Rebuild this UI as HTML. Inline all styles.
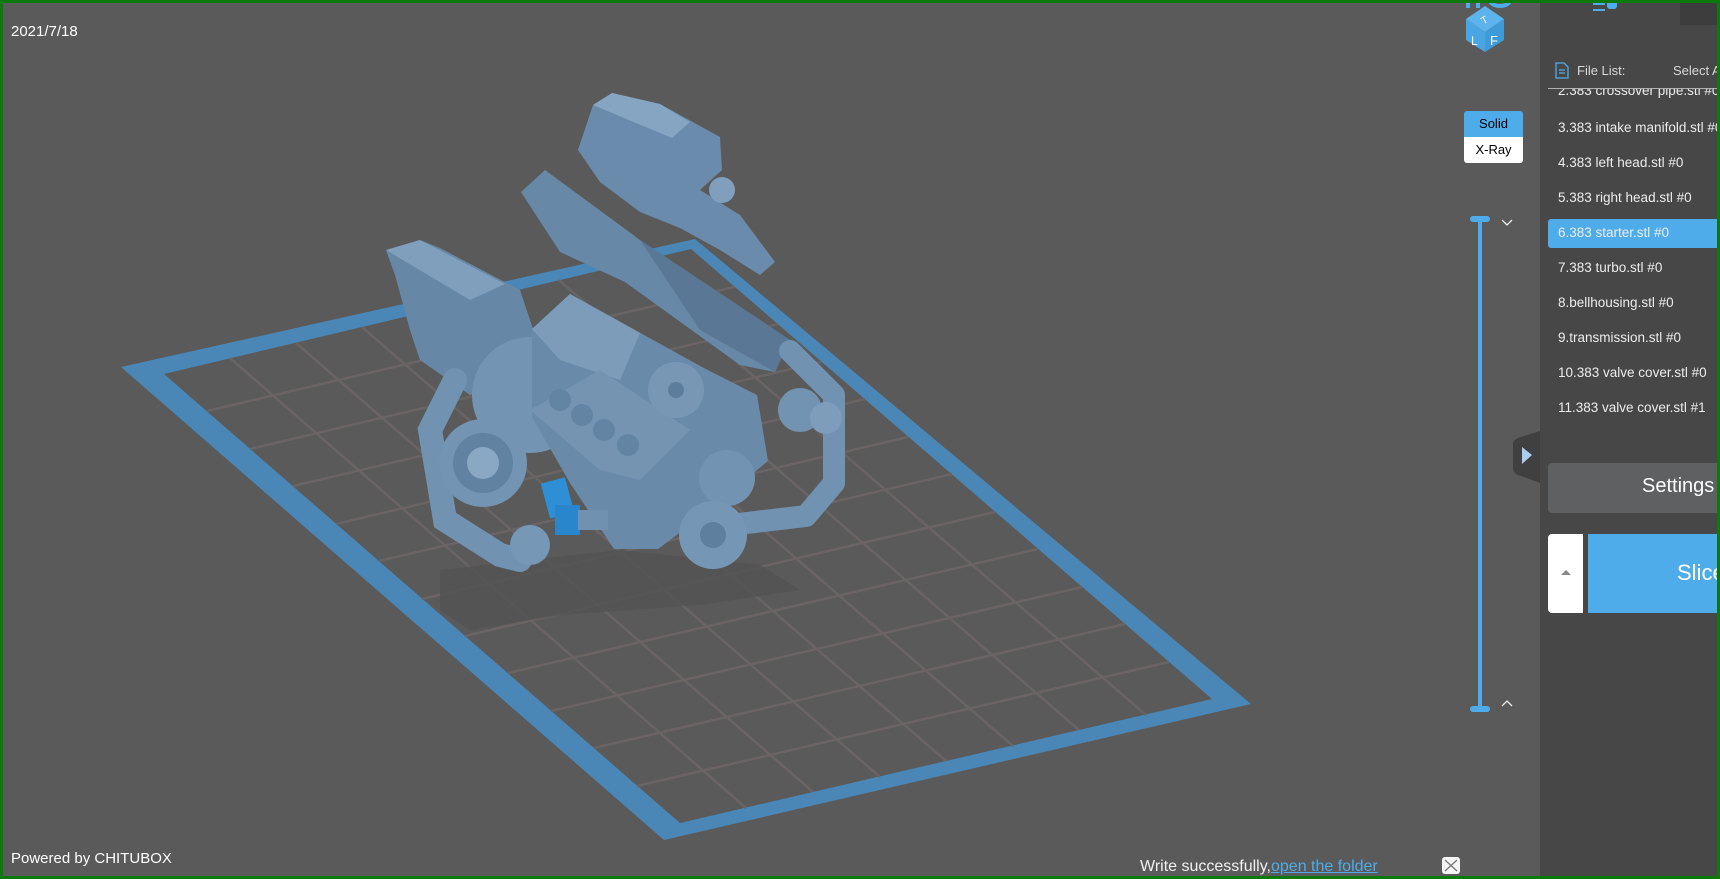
<!DOCTYPE html>
<html><head><meta charset="utf-8"><style>
*{margin:0;padding:0;box-sizing:border-box}
body{width:1720px;height:879px;overflow:hidden;background:#0b7a0b;font-family:"Liberation Sans",sans-serif;position:relative}
#vp{position:absolute;left:3px;top:3px;width:1537px;height:873px;background:#5a5a5a;overflow:hidden}
#sb{position:absolute;left:1540px;top:3px;width:177px;height:873px;background:#474747;overflow:hidden}
.t{position:absolute;color:#fff;white-space:nowrap}
.li{position:absolute;left:18px;color:#ececec;font-size:13.5px;white-space:nowrap}
</style></head><body>
<div id="vp">
<svg width="1537" height="873" viewBox="3 3 1537 873" style="position:absolute;left:0;top:0">
<path fill-rule="evenodd" fill="#4a87b6" d="M121,367 L695,239 L1251,704 L664,840 Z M164,374 L680,823 L1212,699 L691,249 Z"/>
<g stroke="#6a6464" stroke-width="2.5">
<line x1="230" y1="358" x2="746" y2="808"/><line x1="296" y1="343" x2="813" y2="792"/><line x1="362" y1="327" x2="880" y2="777"/><line x1="428" y1="312" x2="946" y2="761"/><line x1="493" y1="296" x2="1013" y2="746"/><line x1="559" y1="280" x2="1079" y2="730"/><line x1="625" y1="265" x2="1146" y2="715"/>
<line x1="207" y1="411" x2="734" y2="287"/><line x1="250" y1="449" x2="778" y2="324"/><line x1="293" y1="486" x2="821" y2="362"/><line x1="336" y1="524" x2="865" y2="399"/><line x1="379" y1="561" x2="908" y2="437"/><line x1="422" y1="599" x2="952" y2="474"/><line x1="465" y1="636" x2="995" y2="512"/><line x1="508" y1="673" x2="1038" y2="549"/><line x1="551" y1="711" x2="1082" y2="587"/><line x1="594" y1="748" x2="1125" y2="624"/><line x1="637" y1="786" x2="1169" y2="662"/>
</g>
<path fill="#535353" opacity="0.8" d="M440,570 L620,550 L760,565 L800,590 L700,605 L560,615 L470,630 L440,610 Z"/>
<path fill="#6a8bab" d="M593,105 L612,93 L660,104 L720,137 L722,170 L700,190 L740,215 L775,262 L760,275 L720,250 L680,228 L640,212 L600,182 L578,150 Z"/>
<path fill="#86a5c2" d="M593,105 L612,93 L660,104 L690,122 L672,138 Z"/>
<circle cx="722" cy="190" r="13" fill="#7f9fbd"/>
<path fill="#6888a7" d="M521,192 L545,170 L640,240 L790,340 L775,372 L740,365 L625,282 L560,252 Z"/>
<path fill="#5a7895" d="M640,240 L790,340 L775,372 L700,330 Z"/>
<path fill="#6787a6" d="M386,250 L420,240 L440,248 L520,290 L535,335 L520,380 L470,395 L420,360 L410,330 L395,275 Z"/>
<path fill="#7f9fbd" d="M386,250 L420,240 L505,284 L470,300 Z"/>
<circle cx="530" cy="395" r="58" fill="#7394b3"/>
<path fill="#6a8aa9" d="M532,329 L570,294 L702,367 L757,395 L768,461 L702,516 L658,549 L614,549 L570,483 L532,417 Z"/>
<path fill="#7c9cba" d="M532,329 L570,294 L640,333 L620,380 L560,360 Z"/>
<path fill="#7494b2" d="M530,410 L600,370 L690,430 L640,480 L600,470 Z"/>
<g fill="#6384a3"><circle cx="560" cy="400" r="11"/><circle cx="582" cy="415" r="11"/><circle cx="604" cy="430" r="11"/><circle cx="628" cy="445" r="11"/></g>
<path fill="none" stroke="#7192b1" stroke-width="22" stroke-linecap="round" stroke-linejoin="round" d="M790,351 L834,395 L834,483 L806,516 L713,527"/>
<path fill="none" stroke="#7192b1" stroke-width="24" stroke-linecap="round" d="M455,380 L430,430 L445,520 L500,555 L520,560"/>
<circle cx="483" cy="463" r="44" fill="#7394b3"/>
<circle cx="483" cy="463" r="30" fill="#6282a1"/>
<circle cx="483" cy="463" r="16" fill="#8aa8c4"/>
<circle cx="530" cy="545" r="20" fill="#7697b5"/>
<circle cx="676" cy="390" r="28" fill="#7797b5"/><circle cx="676" cy="390" r="8" fill="#5d7d9c"/>
<circle cx="727" cy="478" r="28" fill="#7393b2"/>
<circle cx="713" cy="535" r="34" fill="#7596b4"/><circle cx="713" cy="535" r="13" fill="#5f7f9e"/>
<circle cx="800" cy="410" r="22" fill="#7393b2"/><circle cx="826" cy="418" r="16" fill="#7e9dbb"/>
<rect x="545" y="480" width="25" height="36" fill="#2f8fd6" transform="rotate(-15 557 498)"/>
<rect x="555" y="505" width="25" height="30" fill="#2a86cc"/>
<rect x="578" y="510" width="30" height="20" fill="#7091b0"/>
</svg>
<div class="t" style="left:8px;top:20px;font-size:15px">2021/7/18</div>
<div class="t" style="left:8px;top:847px;font-size:15px">Powered by CHITUBOX</div>
<div class="t" style="left:1137px;top:855px;font-size:16px;color:#f0f0f0">Write successfully,<span style="color:#4eacea;text-decoration:underline">open the folder</span></div>
<div style="position:absolute;left:1439px;top:854px;width:18px;height:17px;background:#f4f4f4;border-radius:3px"><svg width="18" height="17"><path d="M3,3 L15,14 M15,3 L3,14" stroke="#777" stroke-width="1.3"/></svg></div>
<svg style="position:absolute;left:1457px;top:-3px" width="60" height="60" viewBox="1460 0 60 60">
<path d="M1466,0 h4 v8 h-4z M1476,0 h4 v8 h-4z" fill="#4eacea"/>
<path d="M1490,0 a10 6 0 0 0 20,0" fill="none" stroke="#4eacea" stroke-width="4"/>
<path d="M1485,6 L1504,19 L1485,32 L1466,19 Z" fill="#5db4ec"/>
<path d="M1466,19 L1485,32 L1485,52 L1466,40 Z" fill="#4aa6e2"/>
<path d="M1485,32 L1504,19 L1504,40 L1485,52 Z" fill="#3f9bd8"/>
<text x="1481" y="23" font-size="10" fill="#fff" font-family="Liberation Sans" transform="rotate(-30 1485 19)">T</text>
<text x="1471" y="45" font-size="12" fill="#fff" font-family="Liberation Sans">L</text>
<text x="1490" y="45" font-size="13" fill="#fff" font-family="Liberation Sans">F</text>
</svg>
<div style="position:absolute;left:1461px;top:108px;width:59px;height:26px;background:#4eacea;border-radius:3px 3px 0 0;font-size:13px;text-align:center;line-height:26px">Solid</div>
<div style="position:absolute;left:1461px;top:134px;width:59px;height:26px;background:#fff;border-radius:0 0 3px 3px;font-size:13px;text-align:center;line-height:26px">X-Ray</div>
<div style="position:absolute;left:1475px;top:214px;width:4px;height:493px;background:#4eacea"></div>
<div style="position:absolute;left:1467px;top:213px;width:20px;height:6px;background:#4eacea;border-radius:3px"></div>
<div style="position:absolute;left:1467px;top:703px;width:20px;height:6px;background:#4eacea;border-radius:3px"></div>
<svg style="position:absolute;left:1497px;top:215px" width="14" height="10"><path d="M2,2 L7,7 L12,2" fill="none" stroke="#eee" stroke-width="1.3"/></svg>
<svg style="position:absolute;left:1497px;top:695px" width="14" height="10"><path d="M2,8 L7,3 L12,8" fill="none" stroke="#eee" stroke-width="1.3"/></svg>
<svg style="position:absolute;left:1510px;top:427px" width="30" height="54"><path d="M30,0 L30,54 L8,46 Q0,44 0,38 L0,14 Q0,9 8,7 Z" fill="#404040"/><path d="M9,17 L19,25 L9,34 Z" fill="#a9cdf0"/></svg>
</div>
<div id="sb">
<div style="position:absolute;left:140px;top:-3px;width:40px;height:25px;background:#3d3d3d"></div>
<div style="position:absolute;left:53px;top:0;width:12px;height:8px;border-bottom:2px solid #4eacea;border-top:2px solid #4eacea"></div>
<div style="position:absolute;left:67px;top:-3px;width:10px;height:9px;background:#4eacea;border-radius:0 0 3px 3px"></div>
<svg style="position:absolute;left:15px;top:59px" width="14" height="17"><path d="M1,1 H9 L13,5 V16 H1 Z M4,8 H10 M4,11 H10" fill="none" stroke="#4eacea" stroke-width="1.3"/></svg>
<div class="t" style="left:37px;top:60px;font-size:13px;color:#d8d8d8">File List:</div>
<div class="t" style="left:133px;top:60px;font-size:13px;color:#d8d8d8">Select A</div>
<div style="position:absolute;left:8px;top:85px;width:169px;height:1px;background:#b0b0b0"></div>
<div style="position:absolute;left:0;top:86px;width:177px;height:340px;overflow:hidden">
<div class="li" style="top:-6px">2.383 crossover pipe.stl #0</div>
<div class="li" style="top:31px">3.383 intake manifold.stl #0</div>
<div class="li" style="top:66px">4.383 left head.stl #0</div>
<div class="li" style="top:101px">5.383 right head.stl #0</div>
<div style="position:absolute;left:8px;top:130px;width:169px;height:29px;background:#4eacea;border-radius:3px 0 0 3px"></div>
<div class="li" style="top:136px">6.383 starter.stl #0</div>
<div class="li" style="top:171px">7.383 turbo.stl #0</div>
<div class="li" style="top:206px">8.bellhousing.stl #0</div>
<div class="li" style="top:241px">9.transmission.stl #0</div>
<div class="li" style="top:276px">10.383 valve cover.stl #0</div>
<div class="li" style="top:311px">11.383 valve cover.stl #1</div>
</div>
<div style="position:absolute;left:8px;top:460px;width:175px;height:50px;background:#5f6062;border-radius:4px"></div>
<div class="t" style="left:102px;top:472px;font-size:20px">Settings</div>
<div style="position:absolute;left:8px;top:531px;width:35px;height:79px;background:#fff;border-radius:4px 0 0 4px"></div>
<svg style="position:absolute;left:21px;top:566px" width="10" height="6"><path d="M0,6 L5,1 L10,6 Z" fill="#888"/></svg>
<div style="position:absolute;left:48px;top:531px;width:130px;height:79px;background:#4eacea"></div>
<div class="t" style="left:137px;top:557px;font-size:22px">Slice</div>
</div>
</body></html>
